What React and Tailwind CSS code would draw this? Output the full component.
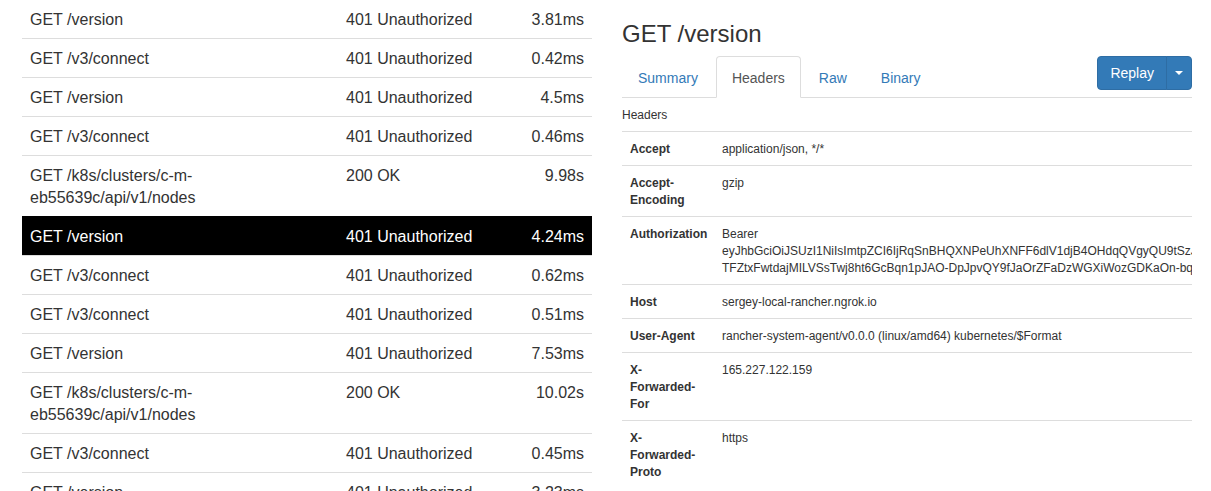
const requests = [
  { path: 'GET /version', status: '401 Unauthorized', time: '3.81ms' },
  { path: 'GET /v3/connect', status: '401 Unauthorized', time: '0.42ms' },
  { path: 'GET /version', status: '401 Unauthorized', time: '4.5ms' },
  { path: 'GET /v3/connect', status: '401 Unauthorized', time: '0.46ms' },
  { path: 'GET /k8s/clusters/c-m-eb55639c/api/v1/nodes', status: '200 OK', time: '9.98s' },
  { path: 'GET /version', status: '401 Unauthorized', time: '4.24ms', selected: true },
  { path: 'GET /v3/connect', status: '401 Unauthorized', time: '0.62ms' },
  { path: 'GET /v3/connect', status: '401 Unauthorized', time: '0.51ms' },
  { path: 'GET /version', status: '401 Unauthorized', time: '7.53ms' },
  { path: 'GET /k8s/clusters/c-m-eb55639c/api/v1/nodes', status: '200 OK', time: '10.02s' },
  { path: 'GET /v3/connect', status: '401 Unauthorized', time: '0.45ms' },
  { path: 'GET /version', status: '401 Unauthorized', time: '3.23ms' },
]

const headers = [
  { name: 'Accept', value: ['application/json, */*'] },
  { name: 'Accept-Encoding', value: ['gzip'] },
  {
    name: 'Authorization',
    value: [
      'Bearer',
      'eyJhbGciOiJSUzI1NiIsImtpZCI6IjRqSnBHQXNPeUhXNFF6dlV1djB4OHdqQVgyQU9tSzJrMmp3aWR1dG9hS0E',
      'TFZtxFwtdajMILVSsTwj8ht6GcBqn1pJAO-DpJpvQY9fJaOrZFaDzWGXiWozGDKaOn-bqX3',
    ],
  },
  { name: 'Host', value: ['sergey-local-rancher.ngrok.io'] },
  { name: 'User-Agent', value: ['rancher-system-agent/v0.0.0 (linux/amd64) kubernetes/$Format'] },
  { name: 'X-Forwarded-For', value: ['165.227.122.159'] },
  { name: 'X-Forwarded-Proto', value: ['https'] },
]

const tabs = ['Summary', 'Headers', 'Raw', 'Binary']

function RequestList() {
  return (
    <div className="w-[570px] shrink-0 text-[16px] leading-[22px] text-[#333]">
      {requests.map((r, i) => (
        <div
          key={i}
          className={`grid grid-cols-[316px_170px_84px] ${i === 0 ? '' : 'border-t'} ${
            r.selected ? 'bg-black text-white border-black' : 'border-[#ddd]'
          }`}
        >
          <div className="px-[8px] pt-[9px] pb-[7px]">{r.path}</div>
          <div className="px-[8px] pt-[9px] pb-[7px] whitespace-nowrap">{r.status}</div>
          <div className="px-[8px] pt-[9px] pb-[7px] text-right whitespace-nowrap">{r.time}</div>
        </div>
      ))}
    </div>
  )
}

function Detail() {
  return (
    <div className="w-[570px] shrink-0 overflow-hidden text-[#333]">
      <h3 className="pt-[21px] pb-[9px] text-[24px] leading-[26px] font-medium">GET /version</h3>

      <div className="flex justify-between items-start border-b border-[#ddd]">
        <ul className="flex">
          {tabs.map((t) => (
            <li key={t} className="mr-[2px] -mb-px">
              <a
                className={`block px-[15px] pt-[11px] pb-[9px] text-[14px] leading-[20px] border rounded-t-[4px] ${
                  t === 'Headers'
                    ? 'bg-white text-[#555] border-[#ddd] border-b-white'
                    : 'text-[#337ab7] border-transparent'
                }`}
              >
                {t}
              </a>
            </li>
          ))}
        </ul>
        <div className="flex text-white text-[14px] leading-[20px]">
          <button className="px-[12px] pt-[6px] pb-[6px] bg-[#337ab7] border border-[#2e6da4] rounded-l-[4px]">
            Replay
          </button>
          <button className="-ml-px px-[8px] py-[6px] bg-[#337ab7] border border-[#2e6da4] rounded-r-[4px] flex items-center">
            <span className="block w-0 h-0 border-t-[4px] border-t-white border-x-[4px] border-x-transparent" />
          </button>
        </div>
      </div>

      <div className="text-[12px] leading-[17px]">
        <div className="pt-[9px] pb-[7px]">Headers</div>
        {headers.map((h) => (
          <div key={h.name} className="flex border-t border-[#ddd]">
            <div className="w-[92px] shrink-0 px-[8px] pt-[9px] pb-[7px] font-bold">
              {h.name.split('-').map((part, i, arr) => (
                <span key={i}>
                  {part}
                  {i < arr.length - 1 ? '-' : ''}
                  {i < arr.length - 1 && <wbr />}
                </span>
              ))}
            </div>
            <div className="px-[8px] pt-[9px] pb-[7px] min-w-0">
              {h.value.map((line, i) => (
                <div key={i} className="whitespace-nowrap">
                  {line}
                </div>
              ))}
            </div>
          </div>
        ))}
      </div>
    </div>
  )
}

export default function App() {
  return (
    <div
      className="h-[491px] overflow-hidden bg-white pl-[22px] flex gap-[30px]"
      style={{ fontFamily: '"Liberation Sans", Arial, sans-serif' }}
    >
      <RequestList />
      <Detail />
    </div>
  )
}
